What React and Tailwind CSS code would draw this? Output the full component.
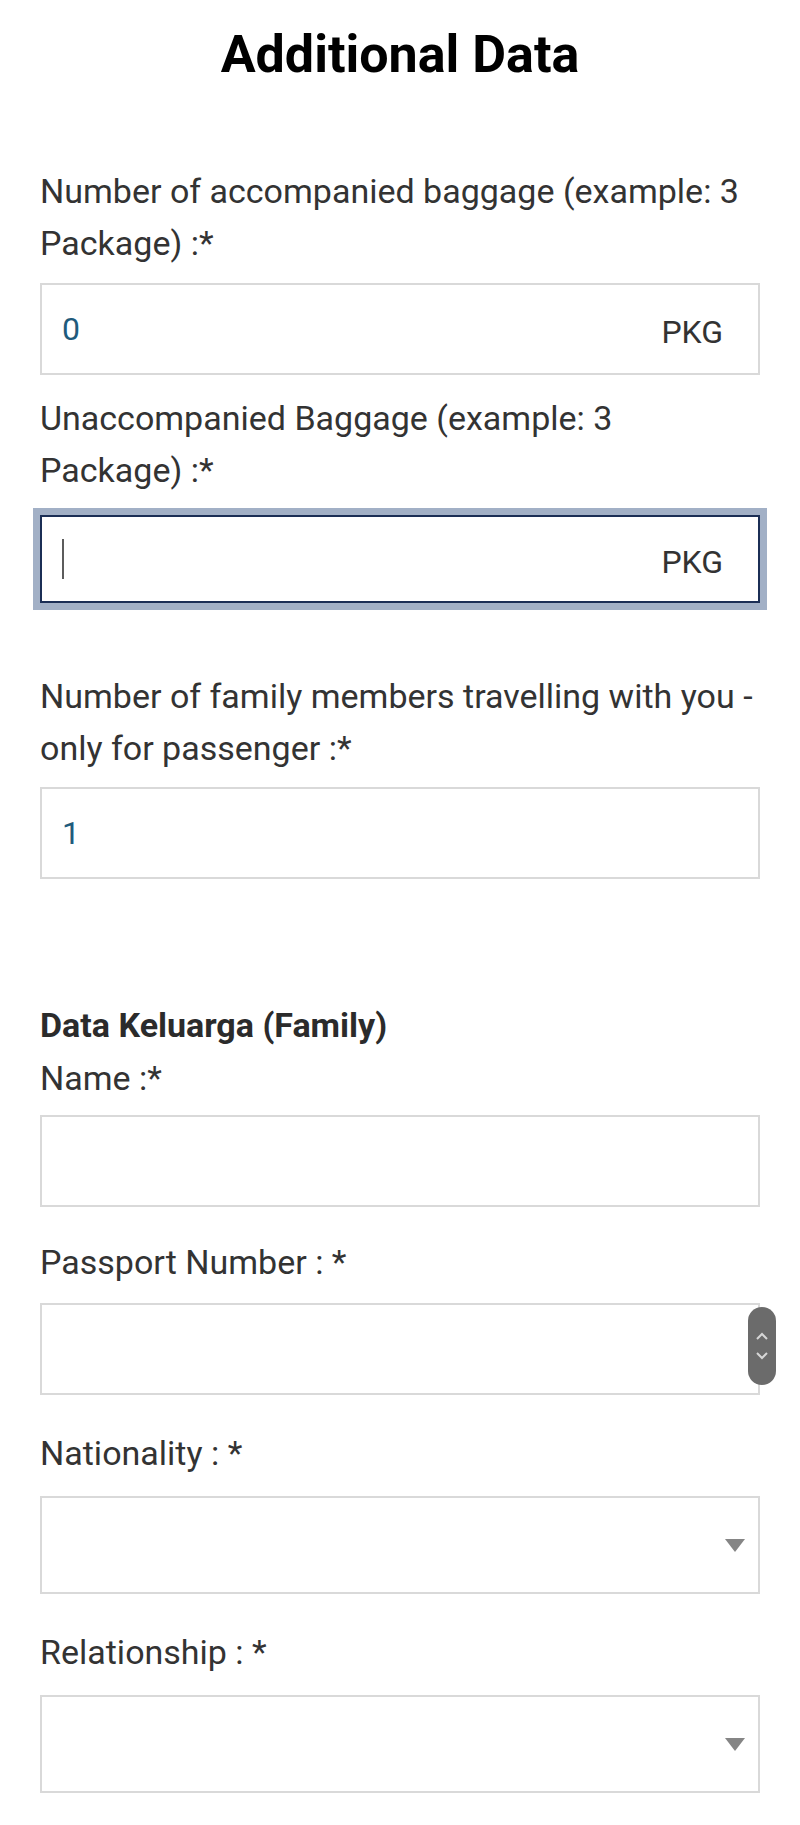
import React from 'react';

const labelCls = "text-[34px] leading-[52px] text-[#333333]";

const TextBox = ({ value, unit, className = "" }) => (
  <div className={`h-[92px] border-2 border-[#d9d9d9] bg-white flex items-center pl-[20px] pr-[35px] ${className}`}>
    <span className="flex-1 text-[32px] text-[#1f5b7c]">{value}</span>
    {unit && <span className="text-[32px] text-[#333333] pt-[6px]">{unit}</span>}
  </div>
);

const SelectBox = ({ className = "" }) => (
  <div className={`h-[98px] border-2 border-[#d9d9d9] bg-white flex items-center justify-end pr-[13px] ${className}`}>
    <svg width="20" height="13" viewBox="0 0 20 13">
      <polygon points="0,0 20,0 10,13" fill="#858585" />
    </svg>
  </div>
);

const App = () => {
  return (
    <div className="w-[800px] h-[1825px] bg-white px-[40px] pt-[25px]" style={{ fontFamily: 'Roboto, "Noto Sans", sans-serif' }}>
      <h1 className="text-center text-[52px] leading-[60px] font-bold text-black">Additional Data</h1>

      <div className={`${labelCls} mt-[80px]`}>Number of accompanied baggage (example: 3 Package) :*</div>
      <TextBox value="0" unit="PKG" className="mt-[14px]" />

      <div className={`${labelCls} mt-[17px] text-[#1c2a78]`}>Unaccompanied Baggage (example: 3 Package) :*</div>
      <div className="mt-[12px] -mx-[7px] border-[7px] border-[#a2b0c6]">
        <div className="h-[88px] border-2 border-[#1b2e55] bg-white flex items-center pl-[20px] pr-[35px]">
          <div className="flex-1 flex items-center">
            <span className="block w-[2px] h-[40px] bg-[#5c5c5c]" />
          </div>
          <span className="text-[32px] text-[#333333] pt-[6px]">PKG</span>
        </div>
      </div>

      <div className={`${labelCls} mt-[60px]`}>Number of family members travelling with you - only for passenger :*</div>
      <TextBox value="1" className="mt-[13px]" />

      <div className="mt-[119px] text-[34px] leading-[54px] font-bold text-[#2b2b2b]">Data Keluarga (Family)</div>
      <div className={labelCls}>Name :*</div>
      <TextBox value="" className="mt-[11px]" />

      <div className={`${labelCls} mt-[29px]`}>Passport Number : *</div>
      <div className="relative mt-[15px]">
        <TextBox value="" />
        <div className="absolute top-[4px] right-[-16px] w-[28px] h-[78px] rounded-full bg-[#6b6b6b] flex flex-col items-center justify-center gap-[10px]">
          <svg width="14" height="9" viewBox="0 0 14 9">
            <polyline points="2,7 7,2 12,7" fill="none" stroke="#d6d6d6" strokeWidth="2" />
          </svg>
          <svg width="14" height="9" viewBox="0 0 14 9">
            <polyline points="2,2 7,7 12,2" fill="none" stroke="#d6d6d6" strokeWidth="2" />
          </svg>
        </div>
      </div>

      <div className={`${labelCls} mt-[32px]`}>Nationality : *</div>
      <SelectBox className="mt-[17px]" />

      <div className={`${labelCls} mt-[32px]`}>Relationship : *</div>
      <SelectBox className="mt-[17px]" />
    </div>
  );
};

export default App;
